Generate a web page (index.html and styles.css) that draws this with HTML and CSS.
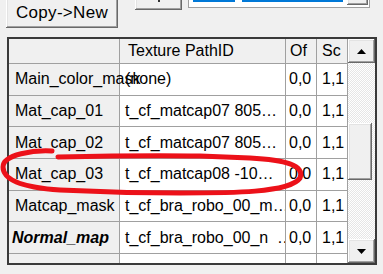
FILE: index.html
```html
<!DOCTYPE html>
<html lang="en">
<head>
<meta charset="UTF-8">
<title>Texture slots</title>
<link rel="stylesheet" href="styles.css">
</head>
<body>

<!-- top toolbar (scrolled partly out of view) -->
<div class="toolbar">
  <button class="btn btn-copy">Copy-&gt;New</button>
  <button class="btn btn-small"><span class="tick"></span></button>
  <div class="combo">
    <div class="field"><span class="sel sel-a"></span><span class="sel sel-b"></span></div>
    <button class="btn btn-drop"></button>
  </div>
</div>

<!-- texture grid -->
<div class="grid">
  <div class="table">
    <div class="row head">
      <div class="cell name"></div>
      <div class="cell path">Texture PathID</div>
      <div class="cell off">Of</div>
      <div class="cell sc">Sc</div>
    </div>
    <div class="row">
      <div class="cell name"><span class="spill">Main_color_mask</span></div>
      <div class="cell path">(none)</div>
      <div class="cell off">0,0</div>
      <div class="cell sc">1,1</div>
    </div>
    <div class="row">
      <div class="cell name">Mat_cap_01</div>
      <div class="cell path">t_cf_matcap07 805…</div>
      <div class="cell off">0,0</div>
      <div class="cell sc">1,1</div>
    </div>
    <div class="row">
      <div class="cell name">Mat_cap_02</div>
      <div class="cell path">t_cf_matcap07 805…</div>
      <div class="cell off">0,0</div>
      <div class="cell sc">1,1</div>
    </div>
    <div class="row">
      <div class="cell name">Mat_cap_03</div>
      <div class="cell path">t_cf_matcap08 -10…</div>
      <div class="cell off">0,0</div>
      <div class="cell sc">1,1</div>
    </div>
    <div class="row">
      <div class="cell name">Matcap_mask</div>
      <div class="cell path">t_cf_bra_robo_00_m…</div>
      <div class="cell off">0,0</div>
      <div class="cell sc">1,1</div>
    </div>
    <div class="row">
      <div class="cell name bold">Normal_map</div>
      <div class="cell path">t_cf_bra_robo_00_n  …</div>
      <div class="cell off">0,0</div>
      <div class="cell sc">1,1</div>
    </div>
    <div class="row last">
      <div class="cell name bold">Texture_map</div>
      <div class="cell path">t_cf_bra_robo_00_t…</div>
      <div class="cell off">0,0</div>
      <div class="cell sc">1,1</div>
    </div>
  </div>

  <div class="scrollbar">
    <div class="sbtn"><svg width="9" height="5" viewBox="0 0 9 5"><polygon points="0,5 9,5 4.5,0" fill="#000"/></svg></div>
    <div class="track top"></div>
    <div class="thumb"></div>
    <div class="track rest"></div>
    <div class="sbtn"><svg width="9" height="5" viewBox="0 0 9 5"><polygon points="0,0 9,0 4.5,5" fill="#000"/></svg></div>
  </div>
</div>

<!-- red marker annotation -->
<svg class="mark" width="383" height="274" viewBox="0 0 383 274">
  <path d="M52,151 C35,150 3,154 3,167 C3,182 30,188 60,190 C100,192 140,193 180,193 C230,193 290,193 300,178 C305,165 285,160 250,158 L200,156 C150,155 100,156 58,157"
        fill="none" stroke="#ec1119" stroke-width="5" stroke-linecap="round"/>
</svg>

</body>
</html>
```

FILE: styles.css
```css
/* ===== page ===== */
html,body{margin:0}
body{
  width:383px;height:274px;overflow:hidden;position:relative;
  background:#f0f0f0;color:#000;
  font-family:"Liberation Sans",Arial,sans-serif;font-size:16px
}

/* ---------- 3d buttons ---------- */
.btn{
  display:block;padding:0;margin:0;border:none;background:#f0f0f0;
  font:inherit;color:#000;box-sizing:border-box;
  box-shadow:inset -1px -1px #696969,inset 1px 1px #fff,inset -2px -2px #a0a0a0,inset 2px 2px #e3e3e3
}

/* ---------- toolbar ---------- */
.toolbar{display:flex;align-items:flex-end;height:28px;padding-left:6px}
.btn-copy{width:112px;height:30px;font-size:17px;letter-spacing:.3px}
.btn-small{display:flex;justify-content:center;align-items:flex-end;width:47px;height:30px;margin:0 0 18px 17px;padding-bottom:8px}
.tick{width:2px;height:3px;background:#333}
.combo{
  display:flex;align-items:flex-end;width:182px;height:28px;margin:0 0 20px 6px;
  box-sizing:border-box;border:1px solid #a0a0a0;border-top:none;background:#fff
}
.field{flex:1;display:flex;align-items:flex-end;gap:7px;height:100%;padding:0 4px 5px 4px;box-sizing:border-box}
.sel{height:4px;background:#0078d7}
.sel-a{width:42px}
.sel-b{width:101px}
.btn-drop{width:22px;height:20px;margin:0 1px 2px 0}

/* ---------- grid ---------- */
.grid{
  display:flex;width:370px;height:228px;margin:9px 0 0 7px;
  box-sizing:border-box;border:2px solid #3a3a3a;background:#fff
}
.table{width:339px;overflow:hidden}
.row{display:grid;grid-template-columns:111px 166px 31px 31px;height:31.67px}
.row.head{height:25px}
.row.head .cell{background:#f0f0f0}
.row.last .cell{align-items:flex-start;padding-top:8px}

.cell{
  display:flex;align-items:center;box-sizing:border-box;
  border-right:1px solid #a0a0a0;border-bottom:1px solid #a0a0a0;
  white-space:pre;overflow:hidden;background:#fff
}
.cell.name{background:#f0f0f0;padding-left:6px;overflow:visible}
.cell.path{padding-left:5px}
.row.head .cell.path{padding-left:8px}
.cell.off{padding-left:3px}
.row.head .cell.off{padding-left:4px}
.cell.sc{padding-left:5px}
.cell.bold{font-weight:bold;font-style:italic;font-size:16px;padding-left:3px}
.spill{position:relative;z-index:1}

/* ---------- scrollbar ---------- */
.scrollbar{
  display:flex;flex-direction:column;width:27px;
  background:repeating-conic-gradient(#fff 0 25%,#e6e6e6 0 50%) 0 0/2px 2px
}
.sbtn{
  height:24px;display:flex;align-items:center;justify-content:center;background:#f0f0f0;
  box-shadow:inset -1px -1px #696969,inset 1px 1px #fff,inset -2px -2px #a0a0a0,inset 2px 2px #e3e3e3
}
.track.top{height:60px}
.track.rest{flex:1}
.thumb{
  height:57px;background:#f0f0f0;margin-right:3px;
  box-shadow:inset -1px -1px #696969,inset 1px 1px #fff,inset -2px -2px #a0a0a0,inset 2px 2px #e3e3e3
}

/* ---------- annotation ---------- */
.mark{position:absolute;left:0;top:0;pointer-events:none}
```
